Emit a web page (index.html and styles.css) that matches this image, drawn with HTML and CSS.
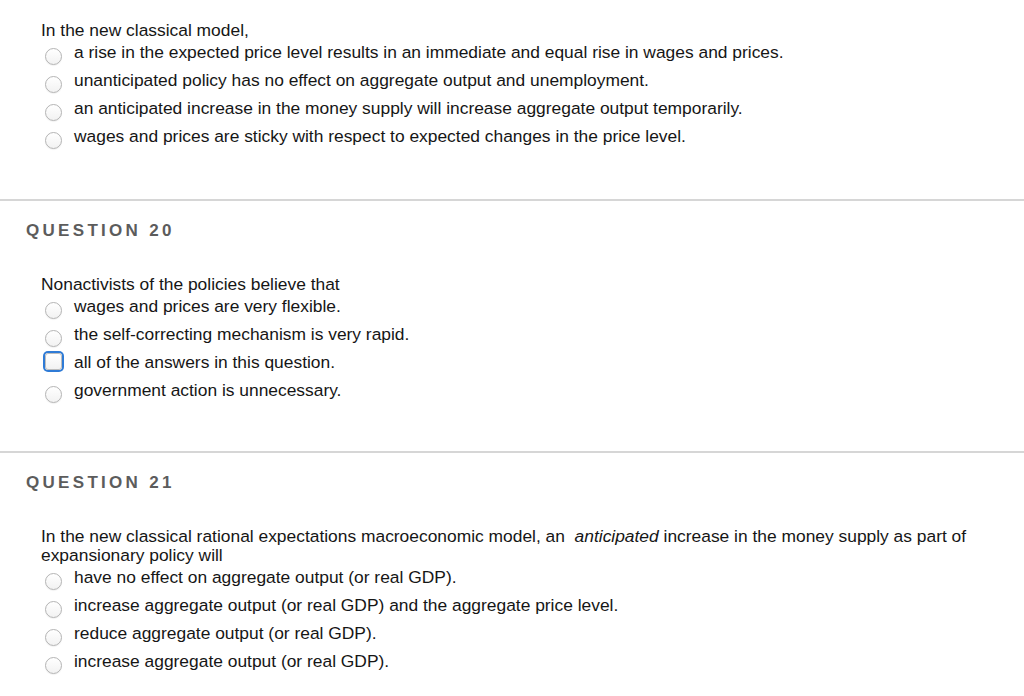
FILE: index.html
```html
<!DOCTYPE html>
<html lang="en">
<head>
<meta charset="utf-8">
<title>Quiz</title>
<link rel="stylesheet" href="styles.css">
</head>
<body>
<div class="page">
  <section class="question first">
    <div class="prompt">In the new classical model,</div>
    <ul class="options">
      <li class="option"><span class="radio"></span><span class="label">a rise in the expected price level results in an immediate and equal rise in wages and prices.</span></li>
      <li class="option"><span class="radio"></span><span class="label">unanticipated policy has no effect on aggregate output and unemployment.</span></li>
      <li class="option"><span class="radio"></span><span class="label">an anticipated increase in the money supply will increase aggregate output temporarily.</span></li>
      <li class="option"><span class="radio"></span><span class="label">wages and prices are sticky with respect to expected changes in the price level.</span></li>
    </ul>
  </section>

  <section class="question">
    <h2 class="q-title">QUESTION 20</h2>
    <div class="prompt">Nonactivists of the policies believe that</div>
    <ul class="options">
      <li class="option"><span class="radio"></span><span class="label">wages and prices are very flexible.</span></li>
      <li class="option"><span class="radio"></span><span class="label">the self-correcting mechanism is very rapid.</span></li>
      <li class="option"><span class="radio focused"></span><span class="label">all of the answers in this question.</span></li>
      <li class="option"><span class="radio"></span><span class="label">government action is unnecessary.</span></li>
    </ul>
  </section>

  <section class="question">
    <h2 class="q-title">QUESTION 21</h2>
    <div class="prompt">In the new classical rational expectations macroeconomic model, an&nbsp; <em>anticipated</em> increase in the money supply as part of expansionary policy will</div>
    <ul class="options">
      <li class="option"><span class="radio"></span><span class="label">have no effect on aggregate output (or real GDP).</span></li>
      <li class="option"><span class="radio"></span><span class="label">increase aggregate output (or real GDP) and the aggregate price level.</span></li>
      <li class="option"><span class="radio"></span><span class="label">reduce aggregate output (or real GDP).</span></li>
      <li class="option"><span class="radio"></span><span class="label">increase aggregate output (or real GDP).</span></li>
    </ul>
  </section>
</div>
</body>
</html>
```

FILE: styles.css
```css
html, body {
  margin: 0;
  padding: 0;
  background: #ffffff;
}

body {
  font-family: "Liberation Sans", Arial, Helvetica, sans-serif;
  font-size: 17.4px;
  color: #161616;
}

.page {
  width: 1024px;
}

.question {
  padding: 20px 40px 51px 0;
  border-top: 2px solid #d6d6d6;
}

.question.first {
  border-top: none;
  padding-top: 21px;
  padding-bottom: 53px;
}

.q-title {
  margin: 0 0 34px 26px;
  font-size: 17px;
  line-height: 20px;
  font-weight: bold;
  letter-spacing: 3.3px;
  color: #5c5c5c;
}

.prompt {
  margin-left: 41px;
  line-height: 19px;
}

.prompt em {
  font-style: italic;
}

.options {
  list-style: none;
  margin: 2px 0 0 0;
  padding: 0;
  display: flex;
  flex-direction: column;
  gap: 8px;
}

.option {
  display: flex;
  align-items: flex-start;
  height: 20px;
  line-height: 20px;
}

.radio {
  position: relative;
  flex: none;
  width: 15px;
  height: 15px;
  margin: 6px 12px 0 45px;
  border: 1px solid #b4b4b4;
  border-radius: 50%;
  background: linear-gradient(#ffffff, #f2f2f2);
  box-shadow: 0 1px 1px rgba(0, 0, 0, 0.06);
}

.radio.focused {
  top: -5px;
  border-radius: 3px;
  border-color: #bdbdbd;
  box-shadow: 0 0 0 2px #2f7bd6;
}
```
